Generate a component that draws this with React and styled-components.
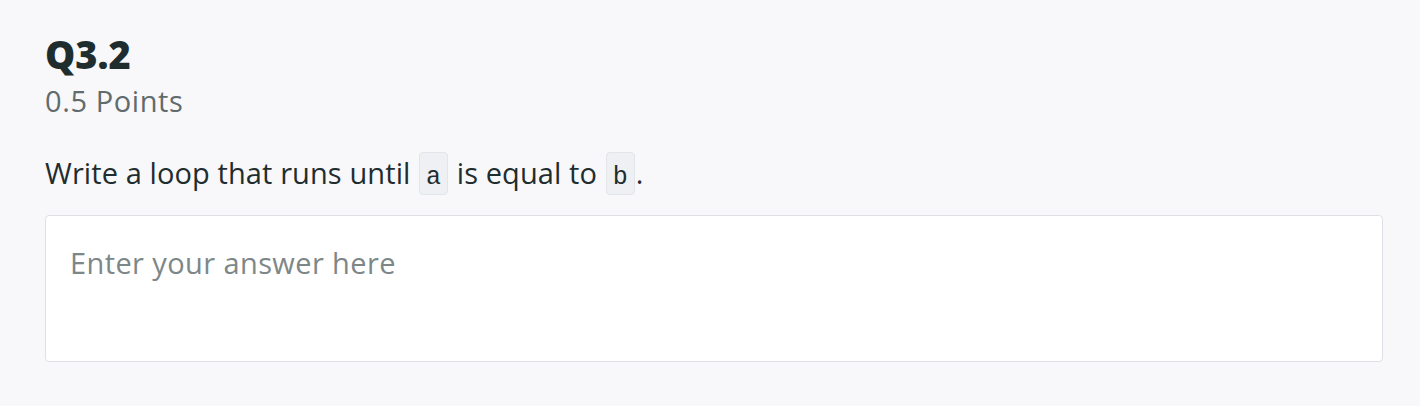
import React from 'react';
import styled, { createGlobalStyle } from 'styled-components';

const GlobalStyle = createGlobalStyle`
    html, body {
        margin: 0;
        padding: 0;
        background: #f8f8fa;
    }
    body {
        font-family: "Open Sans", Lato, sans-serif;
        color: #1f2d2f;
    }
`;

const Page = styled.div`
    padding: 31px 37px 40px 45px;
    min-height: 406px;
    box-sizing: border-box;
`;

const Title = styled.h2`
    margin: 0;
    font-size: 38px;
    line-height: 46px;
    font-weight: 800;
    color: #1f2d2f;
`;

const Points = styled.div`
    margin-top: 6px;
    font-size: 29px;
    line-height: 36px;
    letter-spacing: 0.6px;
    color: #5f6b6d;
`;

const Prompt = styled.p`
    margin: 32px 0 0;
    font-size: 29px;
    line-height: 44px;
    letter-spacing: 0.1px;
`;

const Code = styled.code`
    display: inline-block;
    padding: 8px 6px 0;
    margin: 0 1px;
    font-family: "Liberation Mono", monospace;
    font-size: 25px;
    line-height: 33px;
    letter-spacing: 0;
    vertical-align: baseline;
    background: #eef0f3;
    border: 1px solid #e2e5e9;
    border-radius: 4px;
`;

const Answer = styled.textarea`
    display: block;
    width: 100%;
    height: 147px;
    margin-top: 20px;
    padding: 27px 24px;
    box-sizing: border-box;
    font-family: inherit;
    font-size: 29px;
    letter-spacing: 0.4px;
    color: #1f2d2f;
    background: #fff;
    border: 1px solid #dde1e6;
    border-radius: 4px;
    resize: none;
    outline: none;

    &::placeholder {
        color: #7d8788;
    }
`;

export default function App() {
    return (
        <>
            <GlobalStyle />
            <Page>
                <Title>Q3.2</Title>
                <Points>0.5 Points</Points>
                <Prompt>
                    Write a loop that runs until <Code>a</Code> is equal to <Code>b</Code>.
                </Prompt>
                <Answer placeholder="Enter your answer here" />
            </Page>
        </>
    );
}
